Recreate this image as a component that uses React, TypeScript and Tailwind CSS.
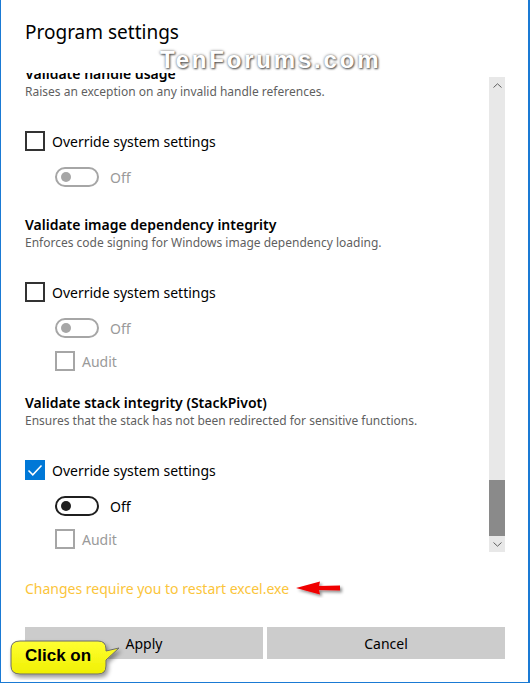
import React from "react";

type BoxState = "off" | "on" | "disabled";

const CheckBox = ({ state }: { state: BoxState }) => {
  if (state === "on") {
    return (
      <div className="w-[20px] h-[20px] bg-[#0078d7] flex items-center justify-center shrink-0">
        <svg width="20" height="20" viewBox="0 0 20 20">
          <path d="M3.5 10.5 L7.8 14.8 L16.5 5.5" fill="none" stroke="#fff" strokeWidth="1.5" />
        </svg>
      </div>
    );
  }
  return (
    <div
      className={
        state === "off"
          ? "w-[20px] h-[20px] border-2 border-[#333333] shrink-0"
          : "w-[20px] h-[20px] border-2 border-[#a6a6a6] shrink-0"
      }
    />
  );
};

const Toggle = ({ disabled }: { disabled?: boolean }) => (
  <div className="flex items-center gap-[11px] h-[20px] ml-[30px]">
    <div
      className={
        disabled
          ? "w-[44px] h-[20px] rounded-full border-2 border-[#a6a6a6] flex items-center"
          : "w-[44px] h-[20px] rounded-full border-2 border-[#1f1f1f] flex items-center"
      }
    >
      <div className={disabled ? "ml-[4px] w-[10px] h-[10px] rounded-full bg-[#a6a6a6]" : "ml-[4px] w-[10px] h-[10px] rounded-full bg-[#1f1f1f]"} />
    </div>
    <span className={disabled ? "text-[14px] text-[#9a9a9a]" : "text-[14px] text-black"}>Off</span>
  </div>
);

const Override = ({ state }: { state: BoxState }) => (
  <div className="mt-[31px] h-[20px] flex items-center gap-[7px]">
    <CheckBox state={state} />
    <span className="text-[14px] text-black">Override system settings</span>
  </div>
);

const Audit = () => (
  <div className="mt-[13px] h-[20px] ml-[30px] flex items-center gap-[7px]">
    <CheckBox state="disabled" />
    <span className="text-[14px] text-[#9a9a9a]">Audit</span>
  </div>
);

const Heading = ({ title, desc, className }: { title: string; desc: string; className?: string }) => (
  <div className={className}>
    <div className="text-[14px] font-semibold leading-[20px] text-black">{title}</div>
    <div className="text-[12px] leading-[16px] text-[#5f5f5f]">{desc}</div>
  </div>
);

const Chevron = ({ up }: { up?: boolean }) => (
  <svg width="9" height="5" viewBox="0 0 9 5">
    <path d={up ? "M0.5 4.5 L4.5 0.8 L8.5 4.5" : "M0.5 0.5 L4.5 4.2 L8.5 0.5"} fill="none" stroke="#606060" strokeWidth="1" />
  </svg>
);

const App = () => {
  return (
    <div className="w-[531px] h-[683px] bg-white relative overflow-hidden font-['Noto_Sans',sans-serif]">
      <div className="w-[530px] h-full border-l border-r-2 border-b border-[#1a7ad4] flex flex-col">
        <h1 className="pl-[24px] pt-[19px] text-[19px] leading-[26px] text-black">Program settings</h1>

        {/* scroll area */}
        <div className="mt-[28px] h-[479px] flex">
          <div className="flex-1 overflow-hidden pl-[24px]">
            <div className="-mt-[9px]">
              <Heading title="Validate handle usage" desc="Raises an exception on any invalid handle references." />
              <Override state="off" />
              <div className="mt-[16px]">
                <Toggle disabled />
              </div>

              <Heading
                className="mt-[28px]"
                title="Validate image dependency integrity"
                desc="Enforces code signing for Windows image dependency loading."
              />
              <Override state="off" />
              <div className="mt-[16px]">
                <Toggle disabled />
              </div>
              <Audit />

              <Heading
                className="mt-[22px]"
                title="Validate stack integrity (StackPivot)"
                desc="Ensures that the stack has not been redirected for sensitive functions."
              />
              <Override state="on" />
              <div className="mt-[16px]">
                <Toggle />
              </div>
              <Audit />
            </div>
          </div>
          <div className="w-[16px] mt-[4px] bg-[#e8e8e8] flex flex-col">
            <div className="h-[16px] flex items-center justify-center">
              <Chevron up />
            </div>
            <div className="flex-1 flex flex-col justify-end">
              <div className="h-[56px] bg-[#8a8a8a]" />
            </div>
            <div className="h-[16px] flex items-center justify-center">
              <Chevron />
            </div>
          </div>
          <div className="w-[23px]" />
        </div>

        <div className="mt-[27px] pl-[24px] h-[20px] flex items-center">
          <span className="text-[14px] leading-[20px] text-[#fbc53a]">Changes require you to restart excel.exe</span>
          <svg className="ml-[5px]" width="52" height="18" viewBox="0 0 52 18">
            <defs>
              <filter id="sh" x="-20%" y="-40%" width="150%" height="190%">
                <feDropShadow dx="2" dy="2" stdDeviation="1.5" floodColor="#000" floodOpacity="0.45" />
              </filter>
            </defs>
            <path d="M2 8 L26 1.5 L25 6 L46 5.5 L46 10.5 L25 10 L26 14.5 Z" fill="#f00000" filter="url(#sh)" />
          </svg>
        </div>

        <div className="mt-[28px] pl-[24px] flex gap-[4px]">
          <button className="w-[238px] h-[32px] bg-[#cccccc] text-[14px] text-black">Apply</button>
          <button className="w-[238px] h-[32px] bg-[#cccccc] text-[14px] text-black">Cancel</button>
        </div>
      </div>

      {/* watermark */}
      <div className="absolute left-[160px] top-[42px] font-['Liberation_Sans',sans-serif] font-bold text-[24px] tracking-[2.8px] text-white [text-shadow:1px_1px_2px_#555,0_0_3px_#777]">
        TenForums.com
      </div>

      {/* callout */}
      <div className="absolute left-[8px] top-[638px] w-[120px] h-[42px]">
        <svg className="absolute left-0 top-0" width="120" height="42" viewBox="0 0 120 42">
          <defs>
            <linearGradient id="yl" x1="0" y1="0" x2="0" y2="1">
              <stop offset="0" stopColor="#ffff33" />
              <stop offset="1" stopColor="#f0f000" />
            </linearGradient>
            <filter id="cs" x="-10%" y="-20%" width="130%" height="160%">
              <feDropShadow dx="2" dy="3" stdDeviation="2" floodColor="#000" floodOpacity="0.4" />
            </filter>
          </defs>
          <path
            d="M12 3 H90 Q98 3 98 11 V13 L111 10 L98 22 V28 Q98 36 90 36 H12 Q3 36 3 28 V11 Q3 3 12 3 Z"
            fill="url(#yl)"
            stroke="#6b6b6b"
            strokeWidth="1"
            filter="url(#cs)"
          />
        </svg>
        <span className="absolute left-[17px] top-[8px] font-['Liberation_Sans',sans-serif] font-bold text-[17px] leading-[20px] text-black">
          Click on
        </span>
      </div>
    </div>
  );
};

export default App;
